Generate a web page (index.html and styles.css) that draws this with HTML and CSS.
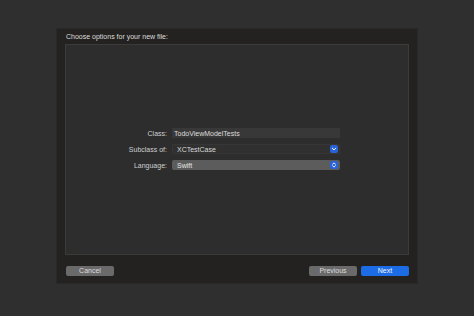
FILE: index.html
```html
<!DOCTYPE html>
<html>
<head>
<meta charset="utf-8">
<link rel="stylesheet" href="styles.css">
</head>
<body>
<div class="dialog">
  <div class="title">Choose options for your new file:</div>
  <div class="panel">
    <div class="form">
      <div class="row">
        <div class="label">Class:</div>
        <div class="field text">TodoViewModelTests</div>
      </div>
      <div class="row">
        <div class="label">Subclass of:</div>
        <div class="field combo">
          <span>XCTestCase</span>
          <span class="knob">
            <svg viewBox="0 0 8 8" width="8" height="8"><path d="M2.3 3.2 L4 4.9 L5.7 3.2" fill="none" stroke="#fff" stroke-width="1" stroke-linecap="round" stroke-linejoin="round"/></svg>
          </span>
        </div>
      </div>
      <div class="row">
        <div class="label">Language:</div>
        <div class="field popup">
          <span>Swift</span>
          <span class="knob">
            <svg viewBox="0 0 8 8" width="8" height="8"><path d="M2.6 3.2 L4 1.9 L5.4 3.2 M2.6 4.8 L4 6.1 L5.4 4.8" fill="none" stroke="#fff" stroke-width="0.9" stroke-linecap="round" stroke-linejoin="round"/></svg>
          </span>
        </div>
      </div>
    </div>
  </div>
  <div class="buttons">
    <div class="btn">Cancel</div>
    <div class="spacer"></div>
    <div class="btn">Previous</div>
    <div class="btn primary">Next</div>
  </div>
</div>
</body>
</html>
```

FILE: styles.css
```css
html, body {
  margin: 0;
  padding: 0;
  background: #2f2f2f;
  width: 474px;
  height: 316px;
  overflow: hidden;
  font-family: "Liberation Sans", Arial, sans-serif;
  font-size: 7px;
  color: #d8d8d8;
}
.dialog {
  margin: 29px 0 0 57px;
  width: 360px;
  height: 254px;
  box-sizing: border-box;
  background: #242220;
  padding: 0 8px;
  display: flex;
  flex-direction: column;
  box-shadow: 0 0 0 1px #2a2928;
}
.title {
  height: 15px;
  line-height: 15px;
  padding-left: 1px;
  color: #dcdcdc;
}
.panel {
  height: 211px;
  box-sizing: border-box;
  background: #2d2d2d;
  border: 1px solid #3b3b3a;
  display: flex;
  flex-direction: column;
  justify-content: center;
}
.form {
  display: flex;
  flex-direction: column;
  gap: 6px;
  margin-top: -1px;
}
.row {
  display: flex;
  align-items: center;
  gap: 5px;
  height: 10px;
}
.label {
  width: 101px;
  text-align: right;
  color: #cfcfcf;
}
.field {
  width: 168px;
  height: 10px;
  box-sizing: border-box;
  display: flex;
  align-items: center;
  justify-content: space-between;
  padding-left: 2px;
  border-radius: 2px;
}
.text {
  background: #383838;
  color: #dedede;
  border-radius: 0;
}
.combo {
  background: #303030;
  padding-left: 5px;
  box-shadow: inset 0 0 0 0.5px #3c3c3c;
}
.popup {
  background: #5c5c5c;
  padding-left: 5px;
  color: #e4e4e4;
}
.knob {
  width: 8px;
  height: 8px;
  margin-right: 2px;
  border-radius: 2px;
  background: #2a63d8;
  display: flex;
}
.buttons {
  display: flex;
  align-items: center;
  gap: 4px;
  margin-top: 11px;
  padding-left: 1px;
}
.spacer {
  flex: 1;
}
.btn {
  width: 48px;
  height: 10px;
  line-height: 10px;
  text-align: center;
  border-radius: 2px;
  background: #6a6a6a;
  color: #dcdcdc;
}
.primary {
  background: #1c6ce6;
  color: #f2f6ff;
}
```
